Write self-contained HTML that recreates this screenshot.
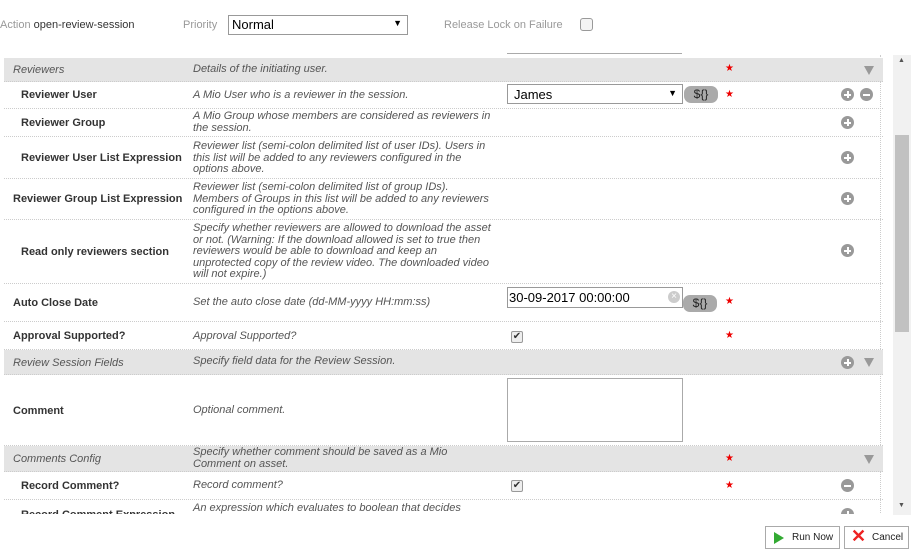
<!DOCTYPE html>
<html><head><style>
*{margin:0;padding:0;box-sizing:border-box}
body{width:912px;height:550px;background:#fff;font-family:"Liberation Sans",Arial,sans-serif;font-size:11px;color:#333;position:relative;overflow:hidden}
.a{position:absolute}
.row{position:absolute;left:4px;width:879px;border-bottom:1px dotted #ccc}
.g{background:#e4e4e4}
.n{position:absolute;font-weight:bold;color:#333;font-size:11px}
.h{position:absolute;font-style:italic;color:#555;left:9px}
.d{position:absolute;left:189px;width:300px;font-style:italic;color:#555;font-size:11px;line-height:11.5px}
.star{position:absolute;left:721px;color:#e00;font-size:10px}
.ic{position:absolute;width:13px;height:13px;border-radius:50%;background:#999}
.ic.p::before,.ic.p::after,.ic.m::before{content:"";position:absolute;background:#fff}
.ic.p::before,.ic.m::before{left:3px;top:5.5px;width:7px;height:2px}
.ic.p::after{left:5.5px;top:3px;width:2px;height:7px}
.tri{position:absolute;width:0;height:0;border-left:5px solid transparent;border-right:5px solid transparent;border-top:9px solid #999}
.cb{position:absolute;width:12px;height:12px;border:1px solid #999;border-radius:2px;background:#eee;font-size:10px;line-height:10px;text-align:center;color:#333}
.btn{position:absolute;background:#aaa;border-radius:7px;height:17px;width:34px;font-size:12px;text-align:center;line-height:17px;color:#222}
</style></head><body>
<div class="a" style="left:0;top:19px;color:#999">Action <span style="color:#333">open-review-session</span></div>
<div class="a" style="left:183px;top:19px;color:#999">Priority</div>
<div class="a" style="left:228px;top:15px;width:180px;height:20px;border:1px solid #999;font-size:13px;padding:1px 3px;color:#000">Normal<span style="position:absolute;right:5px;top:2px;font-size:9px">▼</span></div>
<div class="a" style="left:444px;top:19px;color:#999">Release Lock on Failure</div>
<div class="a" style="left:580px;top:18px;width:13px;height:13px;border:1px solid #999;border-radius:3px;background:#f4f4f4"></div>
<div class="a" style="left:507px;top:53px;width:175px;border-top:1px solid #aaa"></div>
<div class="a" style="left:880px;top:55px;height:460px;border-left:1px dotted #ccc"></div>

<div class="row g" style="top:58px;height:24px"><span class="h" style="top:6px">Reviewers</span><span class="d" style="top:6px">Details of the initiating user.</span><span class="star" style="top:5px">★</span><span class="tri" style="left:860px;top:8px"></span></div>
<div class="row" style="top:82px;height:27px"><span class="n" style="left:17px;top:7px">Reviewer User</span><span class="d" style="top:8px">A Mio User who is a reviewer in the session.</span>
<div class="a" style="left:503px;top:2px;width:176px;height:20px;border:1px solid #999;font-size:13px;padding:2px 6px;color:#000">James<span style="position:absolute;right:5px;top:3px;font-size:9px">▼</span></div>
<div class="btn" style="left:680px;top:4px">${}</div><span class="star" style="top:7px">★</span><span class="ic p" style="left:837px;top:6px"></span><span class="ic m" style="left:856px;top:6px"></span></div>
<div class="row" style="top:109px;height:28px"><span class="n" style="left:17px;top:8px">Reviewer Group</span><span class="d" style="top:2px">A Mio Group whose members are considered as reviewers in the session.</span><span class="ic p" style="left:837px;top:7px"></span></div>
<div class="row" style="top:137px;height:42px"><span class="n" style="left:17px;top:15px">Reviewer User List Expression</span><span class="d" style="top:4px">Reviewer list (semi-colon delimited list of user IDs). Users in this list will be added to any reviewers configured in the options above.</span><span class="ic p" style="left:837px;top:14px"></span></div>
<div class="row" style="top:179px;height:41px"><span class="n" style="left:9px;top:14px">Reviewer Group List Expression</span><span class="d" style="top:3px">Reviewer list (semi-colon delimited list of group IDs). Members of Groups in this list will be added to any reviewers configured in the options above.</span><span class="ic p" style="left:837px;top:13px"></span></div>
<div class="row" style="top:220px;height:64px"><span class="n" style="left:17px;top:26px">Read only reviewers section</span><span class="d" style="top:3px">Specify whether reviewers are allowed to download the asset or not. (Warning: If the download allowed is set to true then reviewers would be able to download and keep an unprotected copy of the review video. The downloaded video will not expire.)</span><span class="ic p" style="left:837px;top:24px"></span></div>
<div class="row" style="top:284px;height:38px"><span class="n" style="left:9px;top:13px">Auto Close Date</span><span class="d" style="top:13px">Set the auto close date (dd-MM-yyyy HH:mm:ss)</span>
<div class="a" style="left:503px;top:3px;width:176px;height:21px;border:1px solid #999;font-size:13px;padding:2px 1px;color:#000">30-09-2017 00:00:00<span style="position:absolute;right:2px;top:3px;width:12px;height:12px;border-radius:50%;background:#ccc;color:#fff;font-size:10px;line-height:12px;text-align:center">×</span></div>
<div class="btn" style="left:679px;top:11px">${}</div><span class="star" style="top:12px">★</span></div>
<div class="row" style="top:322px;height:28px"><span class="n" style="left:9px;top:8px">Approval Supported?</span><span class="d" style="top:9px">Approval Supported?</span><span class="cb" style="left:507px;top:9px">✔</span><span class="star" style="top:8px">★</span></div>
<div class="row g" style="top:350px;height:25px"><span class="h" style="top:7px">Review Session Fields</span><span class="d" style="top:6px">Specify field data for the Review Session.</span><span class="ic p" style="left:837px;top:6px"></span><span class="tri" style="left:860px;top:8px"></span></div>
<div class="row" style="top:375px;height:71px"><span class="n" style="left:9px;top:30px">Comment</span><span class="d" style="top:30px">Optional comment.</span><div class="a" style="left:503px;top:3px;width:176px;height:64px;border:1px solid #aaa"></div></div>
<div class="row g" style="top:446px;height:26px"><span class="h" style="top:7px">Comments Config</span><span class="d" style="top:1px;width:270px">Specify whether comment should be saved as a Mio Comment on asset.</span><span class="star" style="top:7px">★</span><span class="tri" style="left:860px;top:9px"></span></div>
<div class="row" style="top:472px;height:28px"><span class="n" style="left:17px;top:8px">Record Comment?</span><span class="d" style="top:8px">Record comment?</span><span class="cb" style="left:507px;top:8px">✔</span><span class="star" style="top:8px">★</span><span class="ic m" style="left:837px;top:7px"></span></div>
<div class="row" style="top:500px;height:14px;overflow:hidden;border:none"><span class="n" style="left:17px;top:9px">Record Comment Expression</span><span class="d" style="top:3px">An expression which evaluates to boolean that decides</span><span class="ic p" style="left:837px;top:8px"></span></div>
<div class="a" style="left:0;top:514px;width:912px;height:36px;background:#fff"></div>

<div class="a" style="left:893px;top:55px;width:18px;height:460px;background:#f1f1f1"></div>
<div class="a" style="left:895px;top:135px;width:14px;height:197px;background:#c1c1c1"></div>
<div class="a" style="left:898px;top:57px;font-size:7px;color:#555">▲</div>
<div class="a" style="left:898px;top:502px;font-size:7px;color:#555">▼</div>

<div class="a" style="left:765px;top:526px;width:75px;height:23px;border:1px solid #aaa;font-size:10px;padding:5px 0 0 26px;color:#222"><span style="position:absolute;left:8px;top:5px;width:0;height:0;border-top:6px solid transparent;border-bottom:6px solid transparent;border-left:10px solid #3a3"></span>Run Now</div>
<div class="a" style="left:844px;top:526px;width:65px;height:23px;border:1px solid #aaa;font-size:10px;padding:5px 0 0 27px;color:#222"><span style="position:absolute;left:6px;top:-1px;color:#e22;font-size:18px;font-weight:bold;line-height:20px">✕</span>Cancel</div>
</body></html>
